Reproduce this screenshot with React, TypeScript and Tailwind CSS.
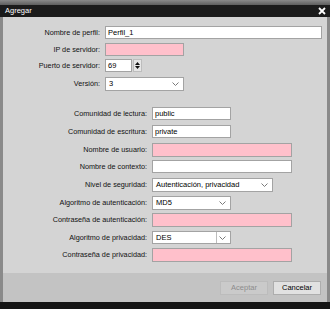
import React from "react";

const font = { fontFamily: '"Liberation Sans", Arial, sans-serif' };

function Chevron () {
  return (
    <svg width="7" height="4" viewBox="0 0 7 4" className="shrink-0">
      <path d="M0.5 0.5 L3.5 3.5 L6.5 0.5" fill="none" stroke="#7a7a7a" strokeWidth="1" />
    </svg>
  );
}

function TextBox ({ w, h = 13, value = "", pink = false }: { w: number; h?: number; value?: string; pink?: boolean }) {
  return (
    <div
      className={`border border-[#a3a3a3] flex items-center pl-[2px] text-[7.5px] text-black ${pink ? "bg-[#ffc0cb]" : "bg-white"}`}
      style={{ width: w, height: h }}
    >
      {value}
    </div>
  );
}

function Select ({ w, value, h = 14 }: { w: number; value: string; h?: number }) {
  return (
    <div className="border border-[#a3a3a3] bg-white flex items-center justify-between pl-[3px] pr-[4px] text-[7.5px] text-black" style={{ width: w, height: h }}>
      <span>{value}</span>
      <Chevron />
    </div>
  );
}

function Row ({ label, h, labelW, children }: { label: string; h: number; labelW: number; children: React.ReactNode }) {
  return (
    <div className="flex items-start" style={{ height: h }}>
      <div className="text-right text-[7.25px] text-[#111] leading-[13px] shrink-0 whitespace-nowrap" style={{ width: labelW }}>{label}</div>
      <div className="ml-[5px]">{children}</div>
    </div>
  );
}

export default function App () {
  return (
    <div className="w-[330px] h-[309px] flex flex-col bg-[#8a8a8a] overflow-hidden" style={font}>
      <div className="h-[5px] bg-gradient-to-b from-[#8a8a8a] to-[#5e5e5e]" />
      <div className="h-[12px] bg-[#1b1b1b] flex items-center justify-between pl-[5px] pr-[4px]">
        <span className="text-[7.5px] text-white leading-none">Agregar</span>
        <svg width="8" height="8" viewBox="0 0 8 8">
          <path d="M1 1 L7 7 M7 1 L1 7" stroke="#ffffff" strokeWidth="1.8" />
        </svg>
      </div>
      <div className="flex-1 flex flex-col mx-[3px] bg-[#d4d4d4]">
        <div className="flex-1 flex flex-col pt-[9px]">
          <Row label="Nombre de perfil:" h={17} labelW={97}>
            <TextBox w={217} value="Perfil_1" />
          </Row>
          <Row label="IP de servidor:" h={16} labelW={97}>
            <TextBox w={79} pink />
          </Row>
          <Row label="Puerto de servidor:" h={18} labelW={97}>
            <div className="flex items-start gap-[1px]">
              <TextBox w={27} value="69" />
              <div className="w-[9px] h-[13px] flex flex-col items-center justify-center gap-[1px] bg-[#e6e6e6] border border-[#bdbdbd]">
                <svg width="5" height="3" viewBox="0 0 5 3"><path d="M0 3 L2.5 0 L5 3 Z" fill="#111" /></svg>
                <svg width="5" height="3" viewBox="0 0 5 3"><path d="M0 0 L2.5 3 L5 0 Z" fill="#111" /></svg>
              </div>
            </div>
          </Row>
          <Row label="Versión:" h={30} labelW={97}>
            <Select w={79} value="3" />
          </Row>
          <Row label="Comunidad de lectura:" h={18} labelW={144}>
            <TextBox w={79} value="public" />
          </Row>
          <Row label="Comunidad de escritura:" h={18} labelW={144}>
            <TextBox w={79} value="private" />
          </Row>
          <Row label="Nombre de usuario:" h={17} labelW={144}>
            <TextBox w={140} h={14} pink />
          </Row>
          <Row label="Nombre de contexto:" h={18} labelW={144}>
            <TextBox w={140} />
          </Row>
          <Row label="Nivel de seguridad:" h={18} labelW={144}>
            <Select w={121} value="Autenticación, privacidad" />
          </Row>
          <Row label="Algoritmo de autenticación:" h={17} labelW={144}>
            <Select w={79} value="MD5" />
          </Row>
          <Row label="Contraseña de autenticación:" h={18} labelW={144}>
            <TextBox w={140} h={14} pink />
          </Row>
          <Row label="Algoritmo de privacidad:" h={17} labelW={144}>
            <div className="w-[79px] h-[13px] border border-[#a3a3a3] bg-white flex items-center pr-[4px]">
              <div className="w-[64px] h-full border-r border-[#bdbdbd] flex items-center pl-[3px] text-[7.5px] text-black">DES</div>
              <div className="flex-1 flex justify-end"><Chevron /></div>
            </div>
          </Row>
          <Row label="Contraseña de privacidad:" h={14} labelW={144}>
            <TextBox w={140} h={14} pink />
          </Row>
        </div>
        <div className="h-[29px] bg-[#c3c3c3] flex items-center justify-end gap-[5px] pr-[6px]">
          <div className="w-[48px] h-[14px] bg-[#cacaca] border border-[#bcbcbc] flex items-center justify-center text-[7.5px] text-[#8c8c8c]">Aceptar</div>
          <div className="w-[48px] h-[14px] bg-[#e1e1e1] border border-[#adadad] flex items-center justify-center text-[7.5px] text-black">Cancelar</div>
        </div>
      </div>
      <div className="h-[7px] bg-[#151515]" />
    </div>
  );
}
